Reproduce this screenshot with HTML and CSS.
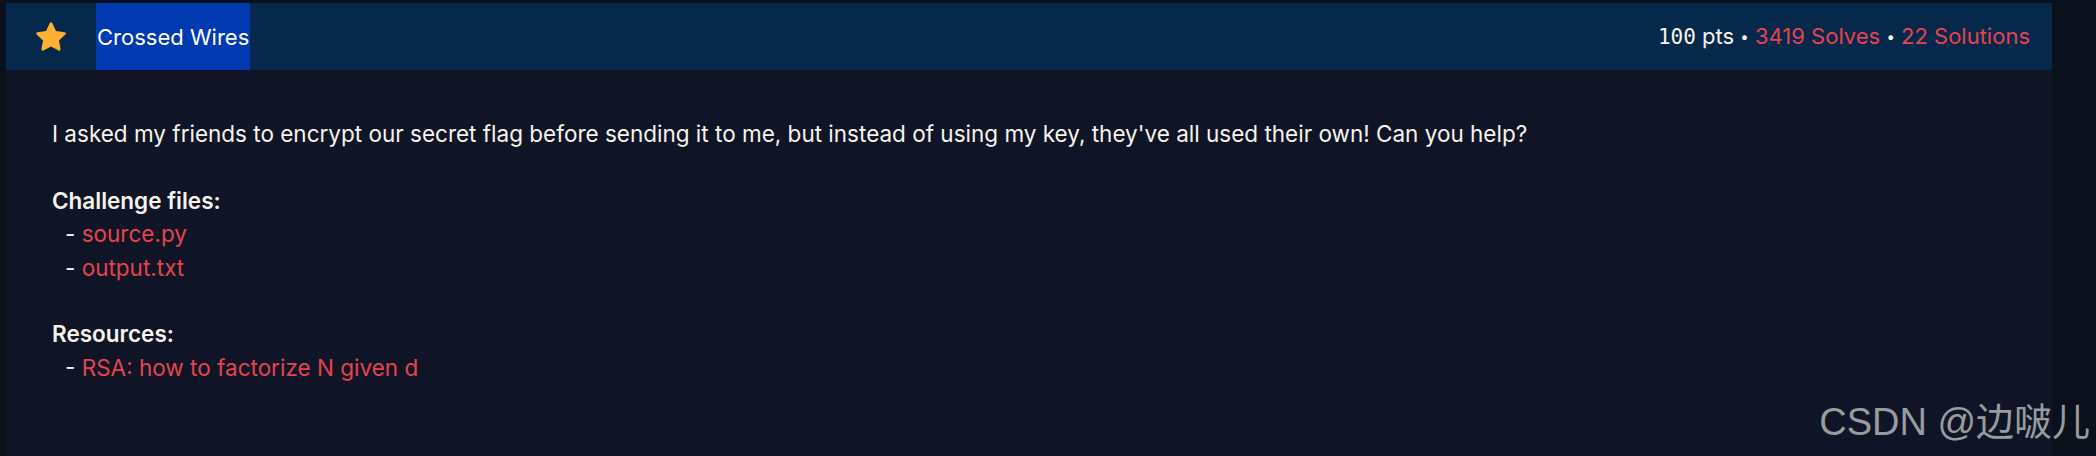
FILE: index.html
```html
<!DOCTYPE html>
<html lang="en">
<head>
<meta charset="utf-8">
<title>Crossed Wires</title>
<link rel="stylesheet" href="styles.css">
</head>
<body>
<div class="page">
  <div class="card">
    <div class="card-header">
      <div class="star-cell">
        <svg class="star" viewBox="0 0 24 24" width="36" height="36"><path d="M12 2.2c.35 0 .66.2.8.52l2.5 5.3 5.75.75c.35.05.64.29.75.62.1.34.01.7-.24.95l-4.22 4.02 1.06 5.72c.06.35-.08.7-.37.9-.29.21-.67.23-.98.06L12 18.270l-5.05 2.77c-.31.17-.69.15-.98-.06-.29-.2-.43-.55-.37-.9l1.06-5.72L2.44 10.34c-.25-.25-.34-.61-.24-.95.11-.33.4-.57.75-.62l5.75-.75 2.5-5.3c.14-.32.45-.52.8-.52z" fill="#fdb22f"/></svg>
      </div>
      <div class="title">Crossed Wires</div>
      <div class="meta"><span class="num">100</span> pts <span class="dot">•</span> <span class="red">3419 Solves</span> <span class="dot">•</span> <span class="red">22 Solutions</span></div>
    </div>
    <div class="card-body">
      <p class="line">I asked my friends to encrypt our secret flag before sending it to me, but instead of using my key, they've all used their own! Can you help?</p>
      <p class="line blank">&nbsp;</p>
      <p class="line bold">Challenge files:</p>
      <p class="line item">- <a class="red">source.py</a></p>
      <p class="line item">- <a class="red">output.txt</a></p>
      <p class="line blank">&nbsp;</p>
      <p class="line bold">Resources:</p>
      <p class="line item">- <a class="red">RSA: how to factorize N given d</a></p>
    </div>
  </div>
  <div class="watermark">CSDN @边啵儿</div>
</div>
</body>
</html>
```

FILE: styles.css
```css
html, body {
  margin: 0;
  padding: 0;
  background: #0b101d;
  width: 2096px;
  height: 456px;
  overflow: hidden;
}
.page {
  position: relative;
  width: 2096px;
  height: 456px;
  padding: 3px 44px 0 6px;
  box-sizing: border-box;
}
.card {
  background: #0f1526;
  height: 453px;
  font-family: Inter, "Noto Sans", sans-serif;
  color: #f7f3ec;
}
.card-header {
  display: flex;
  align-items: stretch;
  height: 67px;
  background: #05284b;
}
.star-cell {
  width: 90px;
  display: flex;
  align-items: center;
  justify-content: center;
}
.star {
  display: block;
}
.title {
  background: #0039b0;
  color: #ffffff;
  font-size: 22px;
  display: flex;
  align-items: center;
  padding: 0 1px;
}
.meta {
  margin-left: auto;
  display: block;
  line-height: 67px;
  padding-right: 22px;
  font-size: 22px;
  color: #f7f3ec;
  white-space: pre;
}
.meta .num {
  font-family: "DejaVu Sans Mono", monospace;
  font-size: 21px;
}
.dot { font-size: 15px; vertical-align: 2px; }
.red { color: #e5434f; }
.card-body {
  padding: 47px 46px 0 46px;
  font-size: 22.5px;
}
.line {
  margin: 0;
  line-height: 33.4px;
  white-space: pre;
}
.bold { font-weight: 600; }
.item { padding-left: 13px; }
.watermark {
  position: absolute;
  right: 6px;
  bottom: 10px;
  font-family: "Liberation Sans", "Noto Sans CJK SC", sans-serif;
  font-size: 38px;
  color: rgba(200, 200, 200, 0.75);
}
```
